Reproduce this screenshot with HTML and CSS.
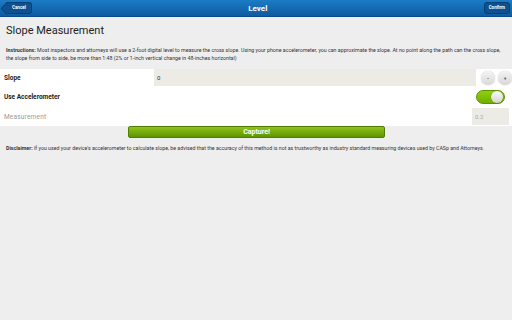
FILE: index.html
```html
<!DOCTYPE html>
<html lang="en">
<head>
    <meta charset="UTF-8">
    <meta name="viewport" content="width=device-width, initial-scale=1.0">
    <title>Level</title>
    <link rel="stylesheet" href="styles.css">
</head>
<body>
    <header class="topbar">
        <button class="bar-btn back-btn">Cancel</button>
        <div class="bar-title">Level</div>
        <button class="bar-btn">Confirm</button>
    </header>

    <h1 class="page-title">Slope Measurement</h1>

    <p class="note"><b>Instructions:</b> Most inspectors and attorneys will use a 2-foot digital level to measure the cross slope. Using your phone accelerometer, you can approximate the slope. At no point along the path can the cross slope, the slope from side to side, be more than 1:48 (2% or 1-inch vertical change in 48-inches horizontal)</p>

    <div class="form">
        <!-- slope value -->
        <div class="row row-slope">
            <label class="label">Slope</label>
            <div class="field">0</div>
            <div class="stepper">
                <span class="round-btn">-</span>
                <span class="round-btn">+</span>
            </div>
        </div>

        <!-- accelerometer switch -->
        <div class="row row-accel">
            <label class="label">Use Accelerometer</label>
            <div class="toggle"><span class="knob"></span></div>
        </div>

        <!-- reading -->
        <div class="row row-measure">
            <label class="label muted">Measurement</label>
            <div class="reading">0.2</div>
        </div>
    </div>

    <button class="capture-btn">Capture!</button>

    <p class="note disclaimer"><b>Disclaimer:</b> If you used your device's accelerometer to calculate slope, be advised that the accuracy of this method is not as trustworthy as industry standard measuring devices used by CASp and Attorneys.</p>
</body>
</html>
```

FILE: styles.css
```css
body {
    margin: 0;
    font-family: Roboto, 'Liberation Sans', sans-serif;
    background: #eeeeee;
    color: #333;
}

.topbar {
    height: 17px;
    display: flex;
    align-items: center;
    justify-content: space-between;
    padding: 0 2px 0 3px;
    background: linear-gradient(#1b7cc6, #0e5a9f);
    border-bottom: 1px solid #0b4a85;
    box-sizing: border-box;
}

.bar-title {
    color: white;
    font-weight: bold;
    font-size: 8px;
}

.bar-btn {
    height: 12px;
    padding: 0 4px;
    border: 1px solid #0a3f73;
    border-radius: 3px;
    background: #0d5190;
    color: white;
    font-family: inherit;
    font-weight: bold;
    font-size: 4.5px;
    line-height: 10px;
}

.back-btn {
    position: relative;
    margin-left: 3px;
    padding: 0 5px 0 6px;
    border-left: none;
    border-radius: 0 3px 3px 0;
}

.back-btn::before {
    content: '';
    position: absolute;
    left: -4px;
    top: 1px;
    width: 8px;
    height: 8px;
    background: #0d5190;
    border-left: 1px solid #0a3f73;
    border-bottom: 1px solid #0a3f73;
    transform: rotate(45deg);
    border-radius: 0 0 0 2px;
}

.page-title {
    margin: 7px 0 0 6px;
    font-weight: normal;
    font-size: 11px;
    line-height: 14px;
    color: #222;
}

.note {
    margin: 8px 10px 0 6px;
    font-size: 5.25px;
    line-height: 8px;
    color: #333;
}

.form {
    margin-top: 7px;
    background: white;
}

.row {
    display: flex;
    align-items: center;
}

.label {
    width: 154px;
    padding-left: 4px;
    box-sizing: border-box;
    font-weight: bold;
    font-size: 6.5px;
    color: #222;
}

.label.muted {
    font-weight: normal;
    color: #999;
    letter-spacing: 0.2px;
}

.row-slope {
    height: 17px;
}

.field {
    flex: 1;
    align-self: stretch;
    display: flex;
    align-items: center;
    padding-left: 3px;
    background: #ecebe5;
    font-size: 6px;
    color: #333;
}

.stepper {
    display: flex;
    gap: 3px;
    margin-left: 5px;
}

.round-btn {
    width: 14px;
    height: 14px;
    border-radius: 50%;
    background: linear-gradient(#f4f4f4, #d8d8d8);
    box-shadow: 0 0 1px rgba(0,0,0,0.4);
    display: flex;
    align-items: center;
    justify-content: center;
    font-size: 5px;
    font-weight: bold;
    color: #555;
}

.row-accel {
    height: 21px;
    justify-content: space-between;
    padding-right: 7px;
}

.toggle {
    width: 29px;
    height: 14px;
    box-sizing: border-box;
    border-radius: 7px;
    background: linear-gradient(#8fcf10, #6fb000);
    border: 1px solid #5c9400;
    display: flex;
    justify-content: flex-end;
    align-items: center;
    padding-right: 1px;
}

.knob {
    width: 12px;
    height: 12px;
    border-radius: 50%;
    background: linear-gradient(#fafafa, #d4d4d4);
    box-shadow: 0 0 1px rgba(0,0,0,0.5);
}

.row-measure {
    height: 19px;
    justify-content: space-between;
    padding-right: 3px;
}

.reading {
    width: 37px;
    height: 17px;
    display: flex;
    align-items: center;
    padding-left: 3px;
    box-sizing: border-box;
    background: #ecebe5;
    font-size: 6px;
    color: #aaa;
}

.capture-btn {
    display: block;
    width: 257px;
    height: 12px;
    margin-left: 128px;
    padding: 0;
    border: 1px solid #4f7e00;
    border-radius: 2px;
    background: linear-gradient(#8fc21c, #5e9500);
    color: white;
    font-family: inherit;
    font-weight: bold;
    font-size: 7px;
}

.disclaimer {
    margin-top: 6px;
}
```
